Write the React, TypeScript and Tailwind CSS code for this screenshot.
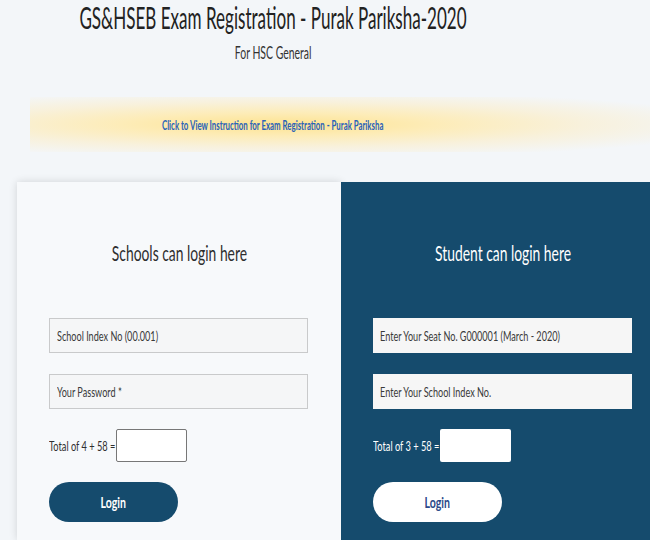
import React from 'react';

const font = { fontFamily: 'Lato, "Open Sans", sans-serif' };

function Sq({ children, className = '' }: { children: React.ReactNode; className?: string }) {
  return <span className={`inline-block whitespace-nowrap ${className}`}>{children}</span>;
}

function Field({ text, dark }: { text: string; dark?: boolean }) {
  return (
    <div
      className={`h-[35px] w-[259px] flex items-center px-[7px] overflow-hidden ${
        dark ? 'bg-[#f6f6f6]' : 'bg-[#f5f6f7] border border-[#c9cacb]'
      }`}
    >
      <Sq className="origin-left scale-x-[0.65] text-[14px] text-[#3a3a3a]">{text}</Sq>
    </div>
  );
}

function LoginBox({
  title,
  fields,
  sum,
  dark
}: {
  title: string;
  fields: string[];
  sum: string;
  dark?: boolean;
}) {
  return (
    <div
      className={`h-[358px] pl-[32px] ${
        dark ? 'bg-[#154b6d] text-white' : 'bg-[#f7f9fb] shadow-[0_0_8px_rgba(0,0,0,0.14)] text-[#2e2e2e]'
      }`}
    >
      <div className="pt-[57px] h-[136px] pr-[32px] flex justify-center">
        <Sq className="origin-center scale-x-[0.66] text-[21px] leading-[28px]">{title}</Sq>
      </div>
      <div className="flex flex-col gap-[21px]">
        {fields.map(f => (
          <Field key={f} text={f} dark={dark} />
        ))}
      </div>
      <div className="flex items-center mt-[20px] h-[33px]">
        <div className="w-[67px] text-[14px]">
          <Sq className="origin-left scale-x-[0.66]">{sum}</Sq>
        </div>
        <div className={`w-[71px] h-[33px] bg-white rounded-[2px] ${dark ? '' : 'border border-[#777]'}`} />
      </div>
      <button
        className={`mt-[20px] w-[129px] h-[40px] rounded-full flex items-center justify-center ${
          dark ? 'bg-white text-[#2c4a8a]' : 'bg-[#154b6d] text-white'
        }`}
      >
        <Sq className="origin-center scale-x-[0.66] font-bold text-[16px]">Login</Sq>
      </button>
    </div>
  );
}

export default function App() {
  return (
    <div className="w-[650px] h-[540px] overflow-hidden bg-[#f3f6f9]" style={font}>
      <div className="w-[546px]">
        <div className="h-[40px] leading-[34px] flex justify-center">
          <Sq className="origin-center scale-x-[0.55] text-[31px] text-[#222]">
            GS&amp;HSEB Exam Registration - Purak Pariksha-2020
          </Sq>
        </div>
        <div className="h-[25px] leading-[24px] flex justify-center">
          <Sq className="origin-center scale-x-[0.58] text-[18px] text-[#333]">For HSC General</Sq>
        </div>
      </div>
      <div className="mt-[32px] ml-[30px] w-[620px] h-[55px] flex items-center bg-[radial-gradient(ellipse_at_40%_50%,#fde390_0%,#fdecb8_30%,#f8f1dc_58%,rgba(243,246,249,0)_88%)]">
        <div className="w-[486px] flex justify-center">
          <Sq className="origin-center scale-x-[0.56] font-bold text-[14px] text-[#2a62b8]">
            Click to View Instruction for Exam Registration - Purak Pariksha
          </Sq>
        </div>
      </div>
      <div className="mt-[30px] ml-[17px] w-[648px] grid grid-cols-2">
        <LoginBox
          title="Schools can login here"
          fields={['School Index No (00.001)', 'Your Password *']}
          sum="Total of 4 + 58 ="
        />
        <LoginBox
          dark
          title="Student can login here"
          fields={['Enter Your Seat No. G000001 (March - 2020)', 'Enter Your School Index No.']}
          sum="Total of 3 + 58 ="
        />
      </div>
    </div>
  );
}
